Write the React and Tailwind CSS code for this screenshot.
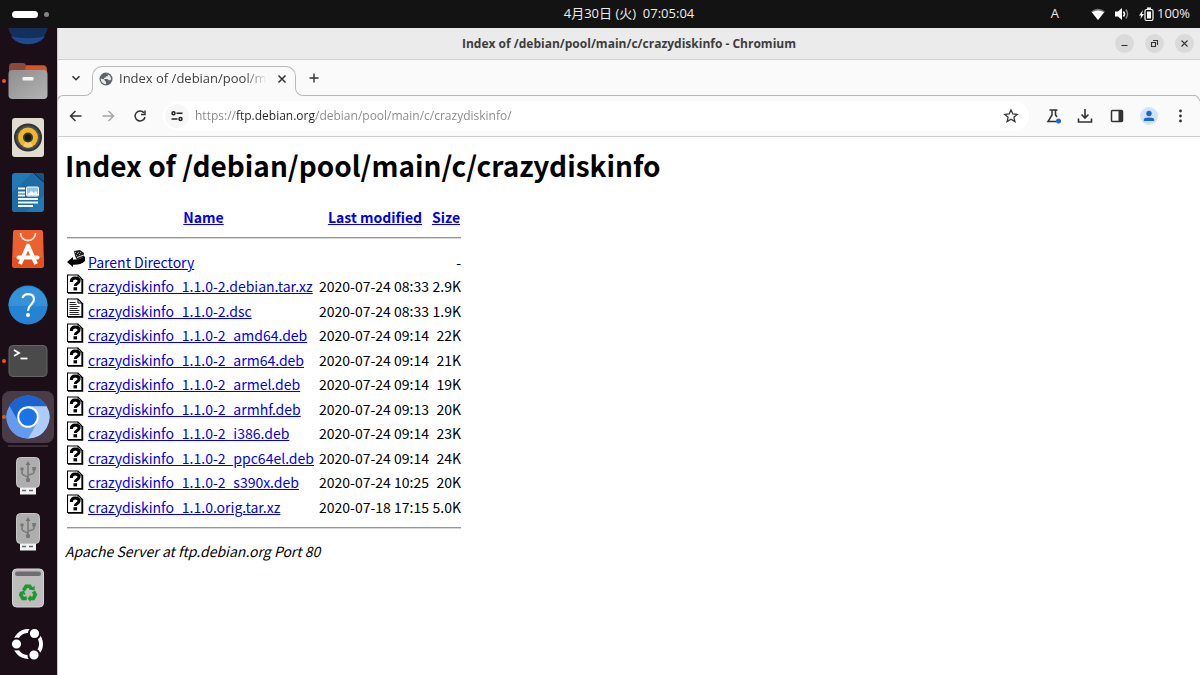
import React from "react";

const files = [
  ["crazydiskinfo_1.1.0-2.debian.tar.xz", "2020-07-24 08:33", "2.9K", "unknown"],
  ["crazydiskinfo_1.1.0-2.dsc", "2020-07-24 08:33", "1.9K", "text"],
  ["crazydiskinfo_1.1.0-2_amd64.deb", "2020-07-24 09:14", "22K", "unknown"],
  ["crazydiskinfo_1.1.0-2_arm64.deb", "2020-07-24 09:14", "21K", "unknown"],
  ["crazydiskinfo_1.1.0-2_armel.deb", "2020-07-24 09:14", "19K", "unknown"],
  ["crazydiskinfo_1.1.0-2_armhf.deb", "2020-07-24 09:13", "20K", "unknown"],
  ["crazydiskinfo_1.1.0-2_i386.deb", "2020-07-24 09:14", "23K", "unknown"],
  ["crazydiskinfo_1.1.0-2_ppc64el.deb", "2020-07-24 09:14", "24K", "unknown"],
  ["crazydiskinfo_1.1.0-2_s390x.deb", "2020-07-24 10:25", "20K", "unknown"],
  ["crazydiskinfo_1.1.0.orig.tar.xz", "2020-07-18 17:15", "5.0K", "unknown"],
];

/* ---------- directory listing icons ---------- */

function FileIcon({ kind }) {
  if (kind === "back") {
    return (
      <svg width="18" height="19" viewBox="0 0 18 19" aria-hidden="true">
        <path d="M7 2l6-1 4 3v4l-7 3-2-4z" fill="#222" />
        <path d="M8 3h1v1H8zM10 4h1v1h-1zM12 5h1v1h-1zM9 6h1v1H9zM11 3h1v1h-1zM13 3h1v1h-1z" fill="#999" />
        <path d="M0 13l6-5v2.500c5 .5 8-.5 11-3.500l1 1v4c-3 3-7 4-12 3.800V18z" fill="#000" />
        <path d="M10 8.500l7-2.500" stroke="#ddd" strokeWidth="1" />
      </svg>
    );
  }
  return (
    <svg width="18" height="20" viewBox="0 0 18 20" aria-hidden="true">
      <path d="M.5 1h10.500l4 4v13.500H.5z" fill="#fff" stroke="#000" strokeWidth="1.100" />
      <path d="M11 1v4h4" fill="none" stroke="#000" />
      <path d="M1 19h14.500V5" fill="none" stroke="#000" strokeWidth="1.500" />
      {kind === "text" ? (
        <path d="M2.500 4.500h6M2.500 6.500h7M2.500 8.500h10M2.500 10.500h8M2.500 12.500h10M2.500 14.500h9M2.500 16.500h10" stroke="#222" strokeWidth="1.100" />
      ) : (
        <g>
          <path d="M4.300 8c0-3 1.400-4 3.900-4 2.600 0 3.900 1.100 3.900 3 0 2.600-3.700 2.400-3.900 5" fill="none" stroke="#000" strokeWidth="3" />
          <rect x="6.500" y="13.200" width="3.600" height="3.200" fill="#000" />
        </g>
      )}
    </svg>
  );
}

/* ---------- dock icons ---------- */

function Thunderbird() {
  return (
    <svg width="40" height="40" viewBox="0 0 40 40" aria-hidden="true">
      <circle cx="20" cy="19" r="20" fill="#142f5c" />
      <path d="M3 31c8 3 26 3 34 0-6 11-28 11-34 0z" fill="#1d4a90" />
    </svg>
  );
}

function Files() {
  return (
    <svg width="40" height="40" viewBox="0 0 40 40" aria-hidden="true">
      <path d="M1 6q0-4 4-4h10q2 0 3 2h17q4 0 4 5v6H1z" fill="#8d4937" />
      <path d="M18 5h17q4 0 4 5v6H15z" fill="#d95424" />
      <rect x="0.500" y="9" width="39" height="29" rx="4" fill="url(#folder)" />
      <rect x="14.500" y="16" width="11" height="3.500" rx="1" fill="#f5f5f5" />
      <defs>
        <linearGradient id="folder" x1="0" y1="0" x2="1" y2="1">
          <stop offset="0" stopColor="#8d8d8d" />
          <stop offset="1" stopColor="#b4b4b4" />
        </linearGradient>
      </defs>
    </svg>
  );
}

function Speaker() {
  return (
    <svg width="40" height="40" viewBox="0 0 40 40" aria-hidden="true">
      <rect x="4" y="1" width="32" height="39" rx="3" fill="#e0dccf" />
      <circle cx="20" cy="20.500" r="14" fill="#2f343b" />
      <circle cx="20" cy="20.500" r="12" fill="#494e55" />
      <circle cx="20" cy="20.500" r="10" fill="#f0b823" />
      <path d="M20 20.500l-5 8.800a10 10 0 0 0 10 0z" fill="#f6cf68" />
      <circle cx="20" cy="20.500" r="5" fill="#32363c" />
      <circle cx="20" cy="20.500" r="3" fill="#15181b" />
    </svg>
  );
}

function Writer() {
  return (
    <svg width="40" height="40" viewBox="0 0 40 40" aria-hidden="true">
      <path d="M7 0h18l11 10v26q0 3-3 3H7q-3 0-3-3V3q0-3 3-3z" fill="#2379b3" />
      <path d="M4 20L24 0h1l11 10v12L18 39H7q-3 0-3-3z" fill="#1e6ba5" />
      <path d="M26 0h8q2 0 2 2v7z" fill="#135385" />
      <path d="M10 15.500h7M10 19.500h7M10 22.500h7M10 26h20M10 29.500h20M10 33h15" stroke="#f4f9fd" strokeWidth="1.800" />
      <rect x="18.500" y="14" width="12" height="9" rx="1" fill="#8ec8f2" stroke="#fff" />
      <path d="M19 22l4-4 3 2 2-2 2 4z" fill="#fff" />
    </svg>
  );
}

function AppCenter() {
  return (
    <svg width="40" height="40" viewBox="0 0 40 40" aria-hidden="true">
      <path d="M7 1h26q2 0 2 3l1 32q0 3-3 3H7q-3 0-3-3L5 4q0-3 2-3z" fill="#ed6030" />
      <path d="M4.300 28h31.500l.2 8q0 3-3 3H7q-3 0-3-3z" fill="#e6501d" />
      <path d="M12.500 4a7.500 7.500 0 0 0 15 0" fill="none" stroke="#fbe3d9" strokeWidth="1.800" />
      <path d="M12 35l8-18.500L28 35" fill="none" stroke="#fff" strokeWidth="4" strokeLinejoin="round" />
      <path d="M10.500 28.500h19" stroke="#fff" strokeWidth="4" strokeLinecap="round" />
    </svg>
  );
}

function Help() {
  return (
    <svg width="40" height="40" viewBox="0 0 40 40" aria-hidden="true">
      <circle cx="20" cy="20" r="19.500" fill="#2484d2" />
      <path d="M.5 21a19.500 19.500 0 0 1 39 0z" fill="#3592da" />
      <path d="M14.500 13c1-3 3-3.800 5.500-3.800 4 0 6 2 6 5 0 5.300-6 5.300-6 11.500" fill="none" stroke="#fff" strokeWidth="2.200" />
      <circle cx="20" cy="30" r="2" fill="#fff" />
    </svg>
  );
}

function Terminal() {
  return (
    <svg width="40" height="40" viewBox="0 0 40 40" aria-hidden="true">
      <rect x="1" y="4.500" width="38" height="31" rx="4" fill="#4a4a4a" stroke="#646464" />
      <path d="M6 9l5 3-5 3" fill="none" stroke="#fff" strokeWidth="1.800" />
      <path d="M12.500 17.500h7" stroke="#fff" strokeWidth="1.800" />
    </svg>
  );
}

function Chromium() {
  return (
    <svg width="44" height="44" viewBox="0 0 44 44" aria-hidden="true">
      <circle cx="22" cy="22" r="21.500" fill="#629bf0" />
      <path d="M3.400 11.200A21.500 21.500 0 0 1 40.600 11.300L22 22 12.700 27.300z" fill="#1b64cf" />
      <path d="M40.600 11.300A21.500 21.500 0 0 1 21.500 43.500L31.300 27.400 22 11.300z" fill="#aecbfa" />
      <path d="M3.400 11.200L12.700 27.300 22 32.500l9.300-5L22 43.500A21.500 21.500 0 0 1 3.400 11.200z" fill="#629bf0" />
      <circle cx="22" cy="22" r="10.800" fill="#fff" />
      <circle cx="22" cy="22" r="8.800" fill="#1a73e8" />
    </svg>
  );
}

function Usb() {
  return (
    <svg width="40" height="40" viewBox="0 0 40 40" aria-hidden="true">
      <rect x="12" y="30" width="16" height="8.500" fill="#f2f2f2" />
      <path d="M14 34.500h4M21 34.500h4" stroke="#666" strokeWidth="1.500" />
      <rect x="8.500" y="1.500" width="23" height="30" rx="4" fill="#aeaeae" stroke="#c6c6c6" />
      <path d="M20 7v17M14 13v4q0 2 6 4M26 13v3q0 2-6 3" fill="none" stroke="#777" strokeWidth="1.500" />
      <path d="M20 5l2.500 4h-5z" fill="#777" />
      <circle cx="20" cy="24" r="2.200" fill="#777" />
      <circle cx="14" cy="13" r="1.800" fill="#777" />
      <rect x="24.300" y="11" width="3.500" height="3.500" fill="#777" />
    </svg>
  );
}

function Trash() {
  return (
    <svg width="40" height="40" viewBox="0 0 40 40" aria-hidden="true">
      <rect x="4.500" y="1" width="31" height="38" rx="4" fill="#bdbdbd" stroke="#d6d6d6" />
      <rect x="7" y="3.500" width="26" height="4.500" rx="2.200" fill="#6e6e6e" />
      <g fill="none" stroke="#1d9a2d" strokeWidth="3.600">
        <path d="M15.500 22.500l2.600-4.300h3.600l1.600 2.700" />
        <path d="M25.500 23.500l1.800 3.200-2 3.700h-3.400" />
        <path d="M18.800 30.400h-4l-2-3.500 1.400-2.500" />
      </g>
      <path d="M21 21.500l5.500 1 .3-4.800zM22.500 27l-3 3.500 3 3.400zM11 24.500l5-2 1.500 4.500z" fill="#1d9a2d" />
    </svg>
  );
}

function UbuntuMark() {
  return (
    <svg width="40" height="40" viewBox="0 0 40 40" aria-hidden="true">
      <circle cx="20" cy="20" r="13" fill="none" stroke="#fff" strokeWidth="4" />
      <g fill="#fff" stroke="#1d0e18" strokeWidth="2">
        <circle cx="8.500" cy="20" r="5.600" />
        <circle cx="26.500" cy="9.500" r="5.600" />
        <circle cx="26" cy="31" r="5.600" />
      </g>
    </svg>
  );
}

function DockItem({ label, running, active, children }) {
  return (
    <button aria-label={label} className="relative flex h-14 w-full shrink-0 items-center justify-center">
      {active && <span className="absolute inset-x-0.5 inset-y-0.5 rounded-lg bg-[#4a3c46]" />}
      {running && <span className="absolute left-0.5 z-10 size-1 rounded-full bg-[#e95420]" />}
      <span className="relative">{children}</span>
    </button>
  );
}

function Dock() {
  return (
    <nav aria-label="Dock" className="flex w-[57px] shrink-0 flex-col overflow-hidden bg-[#1c0e17] pr-px">
      <button aria-label="Thunderbird" className="flex h-[25px] shrink-0 items-end justify-center overflow-hidden pb-2">
        <Thunderbird />
      </button>
      <DockItem label="Files" running><Files /></DockItem>
      <DockItem label="Rhythmbox"><Speaker /></DockItem>
      <DockItem label="LibreOffice Writer"><Writer /></DockItem>
      <DockItem label="App Center"><AppCenter /></DockItem>
      <DockItem label="Help"><Help /></DockItem>
      <DockItem label="Terminal" running><Terminal /></DockItem>
      <DockItem label="Chromium" running active><Chromium /></DockItem>
      <hr className="mx-2 mb-px h-0.5 shrink-0 border-0 bg-[#3b2f37]" />
      <DockItem label="USB drive 1"><Usb /></DockItem>
      <DockItem label="USB drive 2"><Usb /></DockItem>
      <DockItem label="Trash"><Trash /></DockItem>
      <DockItem label="Show applications"><UbuntuMark /></DockItem>
    </nav>
  );
}

/* ---------- top bar ---------- */

function TopBar() {
  return (
    <header className="grid h-7 shrink-0 grid-cols-[1fr_auto_1fr] items-center bg-[#131313] text-[13px] text-[#ececec]">
      <button aria-label="Activities" className="flex items-center gap-1.5 pl-3">
        <span className="h-[7px] w-[26px] rounded-full bg-white" />
        <span className="size-[5px] rounded-full bg-[#858585]" />
      </button>
      <button className="pl-[58px] whitespace-pre">4月30日 (火)  07:05:04</button>
      <div className="flex items-center justify-end pr-2.5">
        <span className="mr-8">A</span>
        <svg width="14" height="14" viewBox="0 0 14 14" className="mr-2.5" aria-hidden="true">
          <path d="M0 4.500Q7-1 14 4.500L7 13z" fill="#777" />
          <path d="M1 5.300Q7 1.500 13 5.300L7 13z" fill="#fff" />
        </svg>
        <svg width="14" height="14" viewBox="0 0 14 14" className="mr-2.5" aria-hidden="true">
          <path d="M0 4.500h3L7 1v12L3 9.500H0z" fill="#fff" />
          <path d="M8.500 4.500q2 2.500 0 5" fill="none" stroke="#fff" strokeWidth="1.500" />
          <path d="M11 2.500q3 4.500 0 9" fill="none" stroke="#888" strokeWidth="1.400" />
        </svg>
        <svg width="15" height="15" viewBox="0 0 15 15" className="mr-[3px]" aria-hidden="true">
          <path d="M4 3L0 8.500h2L1.500 12 5 7H3z" fill="#fff" />
          <rect x="6" y="2.500" width="8" height="11" rx="1.500" fill="none" stroke="#fff" strokeWidth="1.200" />
          <rect x="8" y="4.500" width="4" height="7" fill="#fff" />
          <path d="M8 1.200h4" stroke="#fff" strokeWidth="1.500" />
        </svg>
        <span>100%</span>
      </div>
    </header>
  );
}

/* ---------- browser window ---------- */

function WindowButton({ label, children }) {
  return (
    <button aria-label={label} className="flex size-[19px] items-center justify-center rounded-full bg-[#dadada]">
      <svg width="9" height="9" viewBox="0 0 9 9" fill="none" stroke="#333" strokeWidth="1.100" aria-hidden="true">
        {children}
      </svg>
    </button>
  );
}

function TitleBar() {
  return (
    <div className="grid h-8 grid-cols-[1fr_auto_1fr] items-center border-b border-[#cfcfcf] bg-[#ebebeb]">
      <span />
      <span className="text-[12px] font-bold text-[#3d3d3d]">Index of /debian/pool/main/c/crazydiskinfo - Chromium</span>
      <div className="flex justify-end gap-[11px] pr-1.5">
        <WindowButton label="Minimize"><path d="M1.500 6.500h6" /></WindowButton>
        <WindowButton label="Restore"><path d="M1.500 3.500h4v4h-4zM3 1.500h4.500V6" /></WindowButton>
        <WindowButton label="Close"><path d="M1.500 1.500l6 6M7.500 1.500l-6 6" /></WindowButton>
      </div>
    </div>
  );
}

function TabStrip() {
  return (
    <div className="flex h-9 bg-[#fafafa]">
      <div className="relative flex w-[35px] items-center justify-center">
        <span className="absolute right-0 bottom-0 left-1 h-2.5 rounded-br-lg border-r border-b border-[#b9b9b9]" />
        <button aria-label="Search tabs" className="relative">
          <svg width="10" height="10" viewBox="0 0 10 10" fill="none" stroke="#333" strokeWidth="1.600" aria-hidden="true">
            <path d="M1.500 3.200L5 6.700l3.500-3.500" />
          </svg>
        </button>
      </div>
      <div className="-ml-px mt-1.5 h-5 w-[204px] rounded-t-[10px] border-x border-t border-[#b9b9b9]">
        <div className="flex h-6 items-center pr-2 pl-1.5">
          <svg width="14" height="14" viewBox="0 0 14 14" className="mr-1.5 shrink-0" aria-hidden="true">
            <circle cx="7" cy="7" r="6.500" fill="#5f6368" />
            <path d="M1.800 6.500l3.700 1 .3 1.500 1.200.800v2.400C4 12 1.500 9.500 1.800 6.500zM7 1.800l2.500.700-1 1.700-1.800.300v1.300H5v1.200h3.500l1.200 1.300h1.600l.900-1C12 4.500 9.800 1.800 7 1.800z" fill="#e9eaeb" />
          </svg>
          <span className="min-w-0 flex-1 overflow-hidden text-[13px] whitespace-nowrap text-[#3f3f3f] [mask-image:linear-gradient(to_right,black_85%,transparent)]">
            Index of /debian/pool/main/c/crazydiskinfo
          </span>
          <button aria-label="Close tab" className="ml-2.5">
            <svg width="10" height="10" viewBox="0 0 10 10" stroke="#333" strokeWidth="1.500" aria-hidden="true">
              <path d="M1.500 1.500l7 7M8.500 1.500l-7 7" />
            </svg>
          </button>
        </div>
      </div>
      <div className="relative flex flex-1 items-center pl-3">
        <span className="absolute right-1 bottom-0 -left-px h-2.5 rounded-bl-lg border-b border-l border-[#b9b9b9]" />
        <button aria-label="New tab" className="relative">
          <svg width="12" height="12" viewBox="0 0 12 12" stroke="#333" strokeWidth="1.400" aria-hidden="true">
            <path d="M6 1.500v9M1.500 6h9" />
          </svg>
        </button>
      </div>
    </div>
  );
}

function ToolButton({ label, children }) {
  return (
    <button aria-label={label} className="flex w-8 shrink-0 justify-center">
      <svg width="16" height="16" viewBox="0 0 16 16" fill="none" stroke="#333" strokeWidth="1.500" aria-hidden="true">
        {children}
      </svg>
    </button>
  );
}

function Toolbar() {
  return (
    <div className="relative flex h-[41px] items-center border-b border-[#cfcfcf] bg-[#fafafa] pr-[3px] pl-0.5">
      <span className="absolute top-[-1px] left-[-1px] size-1.5 rounded-tl-md border-t border-l border-[#b9b9b9]" />
      <span className="absolute top-[-1px] right-0 size-1.5 rounded-tr-md border-t border-r border-[#b9b9b9]" />
      <ToolButton label="Back"><path d="M13.500 8h-11M7.500 3L2.500 8l5 5" /></ToolButton>
      <ToolButton label="Forward"><path d="M2.500 8h11M8.500 3l5 5-5 5" stroke="#a5a5a5" /></ToolButton>
      <ToolButton label="Reload">
        <path d="M12 4.800A5 5 0 1 0 13 9" />
        <path d="M13 2.500V6.500H9" />
      </ToolButton>
      <div className="mr-1.5 ml-[7px] flex h-[30px] min-w-0 flex-1 items-center rounded-full bg-white px-0.5">
        <button aria-label="Site information" className="flex size-6 shrink-0 items-center justify-center rounded-full bg-[#f7f7f7]">
          <svg width="12" height="12" viewBox="0 0 12 12" fill="none" stroke="#222" strokeWidth="1.500" aria-hidden="true">
            <circle cx="2.500" cy="3.200" r="1.500" />
            <path d="M5.500 3.200h6M.5 9h6" />
            <circle cx="9.500" cy="9" r="1.500" />
          </svg>
        </button>
        <input
          aria-label="Address"
          defaultValue="https://ftp.debian.org/debian/pool/main/c/crazydiskinfo/"
          className="ml-1.5 min-w-0 flex-1 bg-[linear-gradient(to_right,#888_41px,#222_41px,#222_120px,#888_120px)] bg-clip-text text-[12px] text-transparent outline-none"
        />
        <ToolButton label="Bookmark">
          <path d="M8 2l1.800 4 4.400.4-3.300 2.900 1 4.300L8 11.300l-3.900 2.300 1-4.300L1.800 6.400 6.200 6z" strokeWidth="1.300" />
        </ToolButton>
      </div>
      <div className="flex shrink-0 items-center pl-0.5">
        <ToolButton label="Labs">
          <path d="M4.500 2h8M7 2v5l-4 6.500h8M10.500 2v5l1.500 2" />
          <circle cx="13.500" cy="13" r="2.500" fill="#1a67d8" stroke="none" />
        </ToolButton>
        <ToolButton label="Downloads"><path d="M8 1v9M4.500 6.500L8 10l3.500-3.500M1.500 10.500V14h13v-3.500" strokeWidth="1.600" /></ToolButton>
        <ToolButton label="Side panel">
          <rect x="2.500" y="2.500" width="11" height="11" rx="1" />
          <path d="M9.500 3h4v10h-4z" fill="#333" stroke="none" />
        </ToolButton>
        <button aria-label="Profile" className="flex w-8 justify-center">
          <svg width="18" height="18" viewBox="0 0 18 18" aria-hidden="true">
            <circle cx="9" cy="9" r="9" fill="#d3e3fd" />
            <circle cx="9" cy="6.500" r="2.700" fill="#1967d2" />
            <path d="M3.800 14v-1.300q0-2.200 5.200-2.200t5.200 2.200V14z" fill="#1967d2" />
          </svg>
        </button>
        <ToolButton label="Menu">
          <g fill="#333" stroke="none">
            <circle cx="7.500" cy="3" r="1.400" />
            <circle cx="7.500" cy="8" r="1.400" />
            <circle cx="7.500" cy="13" r="1.400" />
          </g>
        </ToolButton>
      </div>
    </div>
  );
}

function Rule() {
  return <div className="h-0.5 border-t border-b border-t-[#969696] border-b-[#d8d8d8]" />;
}

function FileRow({ kind, name, date, size }) {
  return (
    <tr className="odd:h-[25px] even:h-6">
      <td className="p-0 align-top"><FileIcon kind={kind} /></td>
      <td className="p-0"><a href="#" className="text-[#0000ee] underline">{name}</a></td>
      <td className="p-0">{date}</td>
      <td className="p-0 text-right">{size}</td>
    </tr>
  );
}

function Listing() {
  const head = "p-0 pb-2 text-center font-bold";
  const link = "text-[#0000ee] underline";
  return (
    <main className="flex-1 bg-white px-[7px] pt-2 font-['Noto_Sans_CJK_JP',sans-serif] text-[14px] leading-[24px] whitespace-nowrap text-black">
      <h1 className="text-[28px] leading-[40px] font-bold">Index of /debian/pool/main/c/crazydiskinfo</h1>
      <table className="mt-5 ml-0.5 w-[394px] table-fixed border-collapse">
        <colgroup>
          <col className="w-[21px]" />
          <col className="w-[231px]" />
          <col className="w-[112px]" />
          <col className="w-[30px]" />
        </colgroup>
        <thead>
          <tr>
            <td className="p-0" />
            <th className={head}><a href="#" className={link}>Name</a></th>
            <th className={head}><a href="#" className={link}>Last modified</a></th>
            <th className={head}><a href="#" className={link}>Size</a></th>
          </tr>
          <tr><td colSpan={4} className="p-0 pb-2.5"><Rule /></td></tr>
        </thead>
        <tbody>
          <FileRow kind="back" name="Parent Directory" date="" size="-" />
          {files.map(([name, date, size, kind]) => (
            <FileRow key={name} kind={kind} name={name} date={date} size={size} />
          ))}
        </tbody>
        <tfoot>
          <tr><td colSpan={4} className="p-0 pt-2"><Rule /></td></tr>
        </tfoot>
      </table>
      <address className="mt-2.5">Apache Server at ftp.debian.org Port 80</address>
    </main>
  );
}

export default function App() {
  return (
    <div className="flex h-screen flex-col overflow-hidden font-['Open_Sans','Noto_Sans_CJK_JP',sans-serif]">
      <TopBar />
      <div className="flex min-h-0 flex-1">
        <Dock />
        <div className="flex min-w-0 flex-1 flex-col border-l border-[#c8c8c8]">
          <TitleBar />
          <TabStrip />
          <Toolbar />
          <Listing />
        </div>
      </div>
    </div>
  );
}
